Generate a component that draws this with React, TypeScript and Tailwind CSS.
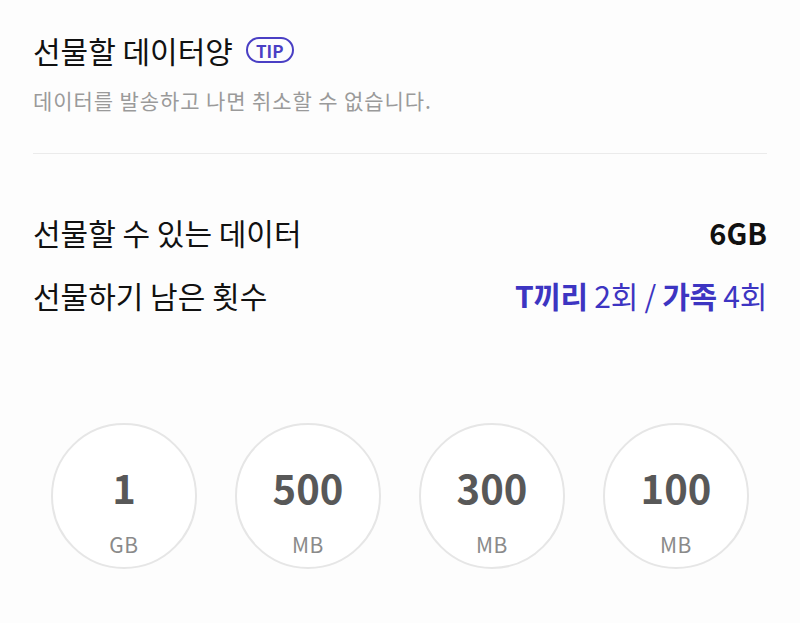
const font = "font-['Noto_Sans_CJK_KR','Noto_Sans',sans-serif]";

const amounts = [
  { value: "1", unit: "GB" },
  { value: "500", unit: "MB" },
  { value: "300", unit: "MB" },
  { value: "100", unit: "MB" },
];

export default function App() {
  return (
    <div className={`${font} min-h-screen w-[800px] bg-[#fdfdfd] px-[33px] pt-[28px] text-[#111]`}>
      <div className="flex items-center gap-[13px]">
        <h1 className="text-[30px] font-normal leading-[44px]">선물할 데이터양</h1>
        <span className="flex h-[26px] items-center rounded-full border-2 border-[#4a3fc4] px-[8px] text-[17px] font-bold leading-none text-[#4a3fc4]">
          TIP
        </span>
      </div>
      <p className="mt-[14px] text-[21px] leading-[28px] tracking-[0.9px] text-[#9a9a9a]">
        데이터를 발송하고 나면 취소할 수 없습니다.
      </p>
      <div className="mt-[39px] h-px bg-[#ebebeb]" />

      <div className="mt-[58px] flex items-center justify-between">
        <span className="text-[30px] leading-[40px]">선물할 수 있는 데이터</span>
        <span className="text-[29px] font-bold leading-[40px]">6GB</span>
      </div>
      <div className="mt-[23px] flex items-center justify-between">
        <span className="text-[30px] leading-[40px]">선물하기 남은 횟수</span>
        <span className="text-[30px] leading-[40px] tracking-[-0.3px] text-[#3d35c2]">
          <b>T끼리</b> 2회 / <b>가족</b> 4회
        </span>
      </div>

      <div className="mt-[108px] flex justify-center gap-[38px]">
        {amounts.map((a) => (
          <div
            key={a.value}
            className="flex h-[146px] w-[146px] flex-col items-center rounded-full border-2 border-[#e6e6e6] bg-white pt-[39px]"
          >
            <span className="text-[40px] font-bold leading-[46px] text-[#585858]">{a.value}</span>
            <span className="mt-[22px] text-[21px] leading-[24px] tracking-[0.5px] text-[#8a8a8a]">{a.unit}</span>
          </div>
        ))}
      </div>
    </div>
  );
}
